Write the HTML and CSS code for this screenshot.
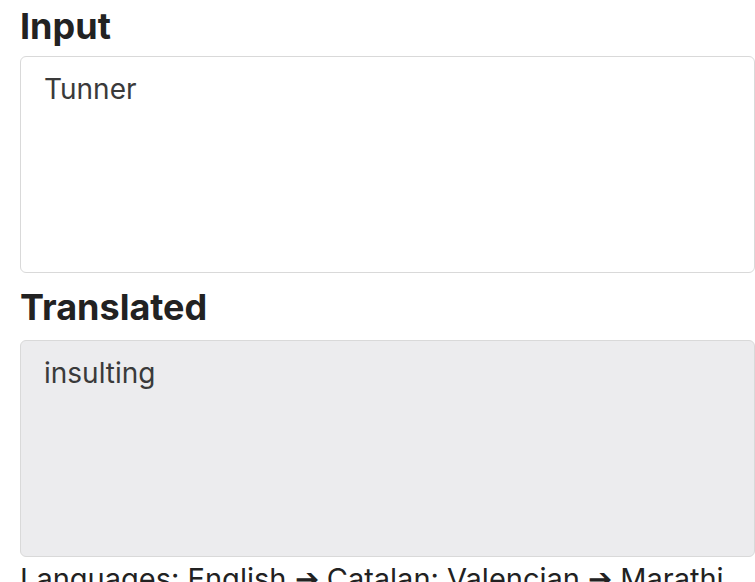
FILE: index.html
```html
<!DOCTYPE html>
<html>
<head>
<meta charset="utf-8">
<link rel="stylesheet" href="styles.css">
</head>
<body>
<main class="panel">
  <h2 class="label">Input</h2>
  <div class="box box-input">Tunner</div>
  <h2 class="label label-second">Translated</h2>
  <div class="box box-output">insulting</div>
  <p class="langs">Languages: English ➔ Catalan: Valencian ➔ Marathi</p>
</main>
</body>
</html>
```
FILE: styles.css
```css
html, body {
  margin: 0;
  padding: 0;
  background: #ffffff;
  overflow: hidden;
}
.panel {
  font-family: "Inter", "Noto Sans", sans-serif;
  color: #222222;
  padding: 5px 0 0 20px;
  display: flex;
  flex-direction: column;
}
.label {
  margin: 0;
  font-size: 36px;
  line-height: 42px;
  font-weight: 700;
  color: #222222;
}
.label-second {
  margin-top: 13px;
}
.box {
  margin-top: 9px;
  height: 217px;
  box-sizing: border-box;
  border: 1px solid #d9d9d9;
  border-radius: 6px;
  padding: 12px 23px;
  font-size: 28px;
  line-height: 40px;
  color: #3a3a3a;
}
.box-input {
  background: #ffffff;
}
.box-output {
  margin-top: 12px;
  background: #ececee;
}
.langs {
  margin: 2px 0 0 0;
  font-size: 29px;
  line-height: 40px;
  color: #222222;
  white-space: nowrap;
}
```
